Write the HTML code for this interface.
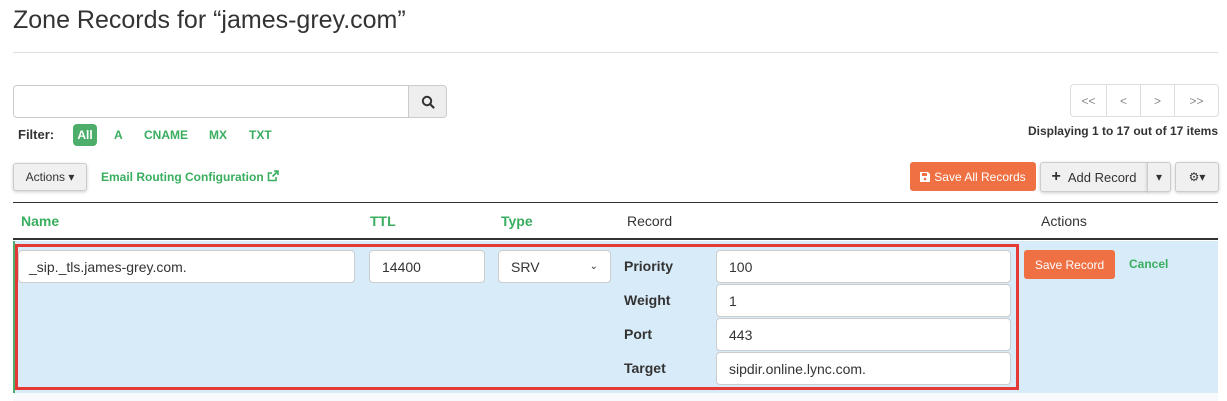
<!DOCTYPE html>
<html><head><style>
*{box-sizing:border-box}
body{margin:0;width:1227px;height:401px;overflow:hidden;background:#fff;font-family:"Liberation Sans",sans-serif;color:#333;position:relative}
.a{position:absolute}
.g{color:#3aae5f;font-weight:bold;font-size:12px}
.inp{position:absolute;background:#fff;border:1px solid #ccc;border-radius:4px;font-size:14px;padding:0 12px;display:flex;align-items:center;color:#333}
.btn{position:absolute;border:1px solid #ccc;background:#f0f0f0;border-radius:3px;font-size:12px;display:flex;align-items:center;justify-content:center;color:#333}
.lbl{position:absolute;left:624px;font-size:14px;font-weight:bold;color:#333}
.pg{position:absolute;top:84px;height:33px;width:37px;border:1px solid #ddd;color:#888;font-size:12px;display:flex;align-items:center;justify-content:center}
</style></head><body>
<div class="a" style="left:13px;top:6px;font-size:25px;color:#333">Zone Records for “james-grey.com”</div>
<div class="a" style="left:13px;top:52px;width:1205px;height:1px;background:#ddd"></div>

<div class="inp" style="left:13px;top:85px;width:396px;height:33px;border-radius:4px 0 0 4px"></div>
<div class="btn" style="left:408px;top:85px;width:39px;height:33px;border-radius:0 4px 4px 0;background:#eee">
<svg width="14" height="14" viewBox="0 0 14 14"><circle cx="6" cy="6" r="4.2" fill="none" stroke="#333" stroke-width="2"/><path d="M9 9l3.5 3.5" stroke="#333" stroke-width="2.2" stroke-linecap="round"/></svg></div>

<div class="a" style="left:18px;top:127px;font-size:13px;font-weight:bold">Filter:</div>
<div class="a" style="left:73px;top:124px;width:24px;height:22px;background:#4cae6a;border-radius:4px;color:#fff;font-size:12px;font-weight:bold;display:flex;align-items:center;justify-content:center">All</div>
<div class="a g" style="left:114px;top:128px">A</div>
<div class="a g" style="left:144px;top:128px">CNAME</div>
<div class="a g" style="left:209px;top:128px">MX</div>
<div class="a g" style="left:249px;top:128px">TXT</div>

<div class="btn" style="left:13px;top:163px;width:74px;height:28px;box-shadow:0 1px 3px rgba(0,0,0,.2)">Actions ▾</div>
<div class="a g" style="left:101px;top:170px">Email Routing Configuration <svg width="12" height="12" viewBox="0 0 12 12" style="vertical-align:-1px"><path d="M9 7v3.5H1.5V3H5M7 1h4v4M11 1L5.5 6.5" fill="none" stroke="#3aae5f" stroke-width="1.6"/></svg></div>

<div class="pg" style="left:1070px;border-radius:4px 0 0 4px">&lt;&lt;</div>
<div class="pg" style="left:1107px;width:34px;border-left:none">&lt;</div>
<div class="pg" style="left:1141px;width:34px;border-left:none">&gt;</div>
<div class="pg" style="left:1175px;width:44px;border-left:none;border-radius:0 4px 4px 0">&gt;&gt;</div>
<div class="a" style="right:9px;top:124px;font-size:12px;font-weight:bold;color:#333">Displaying 1 to 17 out of 17 items</div>

<div class="a" style="left:910px;top:162px;width:126px;height:29px;background:#ee7043;border-radius:3px;color:#fff;font-size:12px;display:flex;align-items:center;justify-content:center"><svg width="10" height="10" viewBox="0 0 10 10" style="margin-right:4px"><path d="M0 0h8l2 2v8H0z" fill="#fff"/><rect x="2" y="1" width="5" height="3" fill="#ee7043"/><circle cx="5" cy="7" r="1.3" fill="#ee7043"/></svg>Save All Records</div>
<div class="btn" style="left:1040px;top:162px;width:108px;height:30px;border-radius:3px 0 0 3px;font-size:13px;box-shadow:0 1px 3px rgba(0,0,0,.2)"><b style="font-size:16px;margin-right:7px">+</b>Add Record</div>
<div class="btn" style="left:1147px;top:162px;width:24px;height:30px;border-radius:0 3px 3px 0;box-shadow:0 1px 3px rgba(0,0,0,.2)">▾</div>
<div class="btn" style="left:1175px;top:162px;width:44px;height:30px;box-shadow:0 1px 3px rgba(0,0,0,.2)">⚙▾</div>

<div class="a" style="left:13px;top:202px;width:1205px;height:1px;background:#333"></div>
<div class="a g" style="left:21px;top:213px;font-size:14px">Name</div>
<div class="a g" style="left:370px;top:213px;font-size:14px">TTL</div>
<div class="a g" style="left:501px;top:213px;font-size:14px">Type</div>
<div class="a" style="left:627px;top:213px;font-size:14px">Record</div>
<div class="a" style="left:1041px;top:213px;font-size:14px">Actions</div>
<div class="a" style="left:13px;top:238px;width:1205px;height:2px;background:#333"></div>

<div class="a" style="left:13px;top:241px;width:1205px;height:152px;background:#d8ebf8;border-left:2px solid #4cae6a"></div>
<div class="a" style="left:13px;top:393px;width:1205px;height:8px;background:#f8f9fa"></div>
<div class="a" style="left:15px;top:244px;width:1004px;height:146px;border:3px solid #e53935"></div>

<div class="inp" style="left:18px;top:250px;width:337px;height:33px;padding-left:10px">_sip._tls.james-grey.com.</div>
<div class="inp" style="left:369px;top:250px;width:116px;height:33px">14400</div>
<div class="inp" style="left:498px;top:250px;width:113px;height:33px;justify-content:space-between">SRV<span style="font-size:10px">⌄</span></div>

<div class="lbl" style="top:258px">Priority</div>
<div class="lbl" style="top:292px">Weight</div>
<div class="lbl" style="top:326px">Port</div>
<div class="lbl" style="top:360px">Target</div>
<div class="inp" style="left:716px;top:250px;width:295px;height:33px">100</div>
<div class="inp" style="left:716px;top:284px;width:295px;height:33px">1</div>
<div class="inp" style="left:716px;top:318px;width:295px;height:33px">443</div>
<div class="inp" style="left:716px;top:352px;width:295px;height:33px">sipdir.online.lync.com.</div>

<div class="a" style="left:1024px;top:250px;width:91px;height:29px;background:#ee7043;border-radius:3px;color:#fff;font-size:12px;display:flex;align-items:center;justify-content:center">Save Record</div>
<div class="a g" style="left:1129px;top:257px">Cancel</div>
</body></html>
